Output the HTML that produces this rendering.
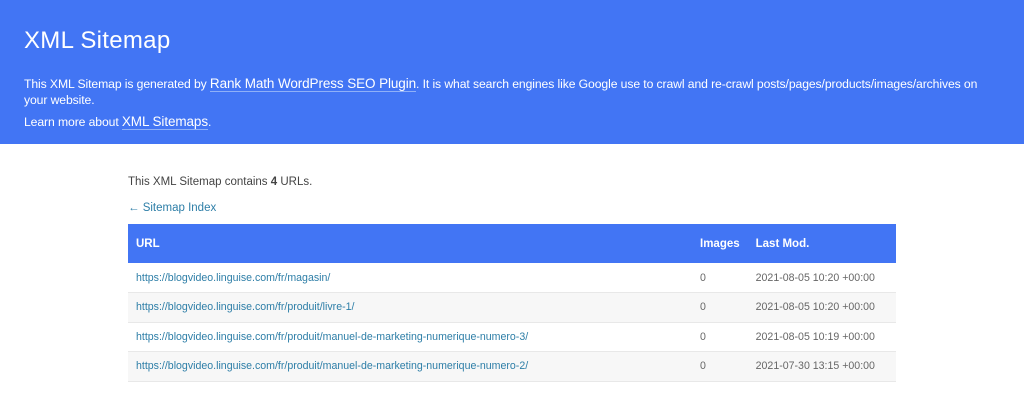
<!DOCTYPE html>
<html><head><meta charset="utf-8">
<style>
*{margin:0;padding:0;box-sizing:border-box}
body{width:1024px;height:416px;background:#fff;font-family:"Liberation Sans",sans-serif;color:#444;overflow:hidden}
#hd{background:#4275f4;height:144px;color:#fff;padding:0 24px;position:relative}
#hd h1{font-weight:normal;font-size:24px;position:absolute;left:24px;top:27px;letter-spacing:0.3px}
#hd p{font-size:12.2px;line-height:16px;position:absolute;left:24px;width:968px;letter-spacing:-0.1px}
#hd a{color:#fff;text-decoration:none;border-bottom:1px solid #8fb0f8;font-size:13.5px}
#c{position:absolute;left:128px;top:0;width:768px}
.t{position:absolute;font-size:11.5px;color:#444}
a.l{color:#2d7ea7;text-decoration:none}
table{position:absolute;top:224px;left:0;width:768px;border-collapse:collapse;font-size:10.6px}
th{background:#4275f4;color:#fff;text-align:left;height:39px;padding:0 8px;font-size:11.5px}
td{height:29.5px;padding:0 8px;color:#666;border-bottom:1px solid #e8e8e8}
tr.g td{background:#f7f7f7}
td a{color:#2d7ea7;text-decoration:none}
</style></head><body>
<div id="hd">
<h1>XML Sitemap</h1>
<p style="top:76px">This XML Sitemap is generated by <a>Rank Math WordPress SEO Plugin</a>. It is what search engines like Google use to crawl and re-crawl posts/pages/products/images/archives on your website.</p>
<p style="top:114px">Learn more about <a>XML Sitemaps</a>.</p>
</div>
<div id="c">
<div class="t" style="top:176px">This XML Sitemap contains <b>4</b> URLs.</div>
<div class="t" style="top:202px"><a class="l">← Sitemap Index</a></div>
<table>
<tr><th style="width:564px">URL</th><th style="width:54px">Images</th><th>Last Mod.</th></tr>
<tr><td><a>https://blogvideo.linguise.com/fr/magasin/</a></td><td>0</td><td>2021-08-05 10:20 +00:00</td></tr>
<tr class="g"><td><a>https://blogvideo.linguise.com/fr/produit/livre-1/</a></td><td>0</td><td>2021-08-05 10:20 +00:00</td></tr>
<tr><td><a>https://blogvideo.linguise.com/fr/produit/manuel-de-marketing-numerique-numero-3/</a></td><td>0</td><td>2021-08-05 10:19 +00:00</td></tr>
<tr class="g"><td><a>https://blogvideo.linguise.com/fr/produit/manuel-de-marketing-numerique-numero-2/</a></td><td>0</td><td>2021-07-30 13:15 +00:00</td></tr>
</table>
</div>
</body></html>
